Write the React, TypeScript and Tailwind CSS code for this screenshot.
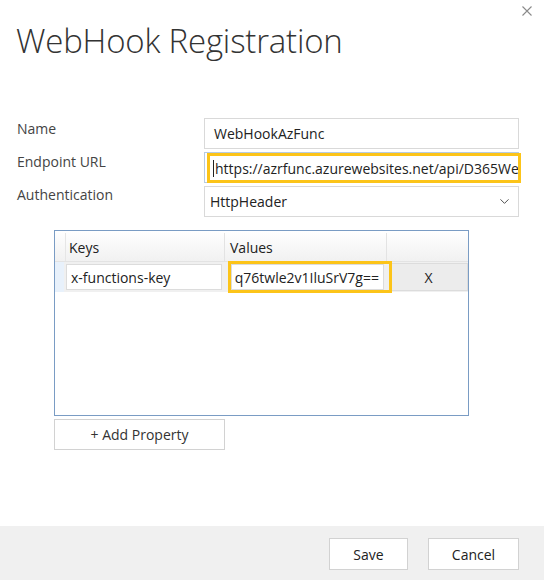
import { ChevronDown } from "lucide-react";

const font = { fontFamily: '"Open Sans", "Noto Sans", sans-serif' };

function Label({ children }: { children: React.ReactNode }) {
	return <div className="h-[33px] pt-[2px] text-[14px] leading-[20px] text-[#444]">{children}</div>;
}

export default function App() {
	return (
		<div
			className="relative flex h-[580px] w-[544px] flex-col bg-white text-[#222]"
			style={font}
		>
			<button type="button" className="absolute right-[12px] top-[6px] text-[#8a8a8a]">
				<svg width="10" height="10" viewBox="0 0 10 10" fill="none" stroke="currentColor" strokeWidth="1.1">
					<path d="M0.5 0.5 L9.5 9.5 M9.5 0.5 L0.5 9.5" />
				</svg>
			</button>

			<h1 className="pl-[16px] pt-[17px] text-[33px] font-light leading-[48px] tracking-[-0.2px] text-[#333]">
				WebHook Registration
			</h1>

			<div className="mt-[52px] flex pl-[17px] pr-[25px]">
				<div className="w-[187px] shrink-0">
					<Label>Name</Label>
					<Label>Endpoint URL</Label>
					<Label>Authentication</Label>
				</div>
				<div className="flex min-w-0 flex-1 flex-col gap-[3px] pt-[1px]">
					<div className="flex h-[31px] items-center border border-[#d9d9d9] pl-[9px] text-[14px]">
						WebHookAzFunc
					</div>
					<div className="h-[31px] border border-[#b6cbe3]">
						<div className="ml-[2px] mr-[-3px] flex h-[30px] items-center overflow-hidden whitespace-nowrap border-[3px] border-[#fcc419] pl-[3px] text-[14px]">
							<span className="mr-[1px] inline-block h-[17px] w-[1px] shrink-0 bg-[#222]" />
							https://azrfunc.azurewebsites.net/api/D365WebHook
						</div>
					</div>
					<div className="flex h-[31px] items-center justify-between border border-[#d9d9d9] pl-[5px] pr-[6px] text-[14px]">
						<span>HttpHeader</span>
						<ChevronDown size={15} strokeWidth={1.5} className="text-[#444]" />
					</div>
				</div>
			</div>

			<div className="ml-[54px] mt-[13px] flex h-[186px] w-[415px] flex-col border border-[#7a9cc4]">
				<div className="flex h-[31px] border-b border-[#e3e3e3] bg-gradient-to-b from-white to-[#f1f1f1] pt-[2px] text-[14px]">
					<div className="w-[11px] border-r border-[#e6e6e6]" />
					<div className="flex w-[159px] items-center border-r border-[#e3e3e3] pl-[3px]">Keys</div>
					<div className="flex w-[162px] items-center border-r border-[#e3e3e3] pl-[5px]">Values</div>
					<div className="flex-1" />
				</div>
				<div className="flex h-[30px] items-center bg-[#f0f0f0] text-[14px]">
					<div className="h-full w-[9px] bg-[#e8f1fb]" />
					<div className="ml-[2px] flex h-[26px] w-[156px] items-center border border-[#dcdcdc] bg-white pl-[4px]">
						x-functions-key
					</div>
					<div className="relative z-10 ml-[6px] flex h-[32px] w-[164px] items-center border-[3px] border-[#fcc419] bg-[#f0f0f0]">
						<div className="flex h-[26px] w-[153px] items-center justify-end overflow-hidden whitespace-nowrap border border-[#dcdcdc] bg-white pr-[4px]">
							<span className="shrink-0">q76twle2v1IluSrV7g==</span>
						</div>
					</div>
					<div className="-ml-[3px] flex h-[28px] flex-1 items-center justify-center border border-[#dcdcdc] bg-[#ececec] text-[14px]">
						X
					</div>
				</div>
				<div className="flex-1" />
			</div>

			<button
				type="button"
				className="ml-[54px] mt-[3px] h-[31px] w-[171px] border border-[#d2d2d2] bg-white text-[14px] text-[#333]"
			>
				+ Add Property
			</button>

			<div className="flex-1" />

			<div className="flex h-[54px] items-start justify-end gap-[20px] bg-[#f0f0f0] pr-[25px] pt-[12px]">
				<button
					type="button"
					className="h-[32px] w-[79px] border border-[#d2d2d2] bg-white text-[14px] text-[#222]"
				>
					Save
				</button>
				<button
					type="button"
					className="h-[32px] w-[91px] border border-[#d2d2d2] bg-white text-[14px] text-[#222]"
				>
					Cancel
				</button>
			</div>
		</div>
	);
}
